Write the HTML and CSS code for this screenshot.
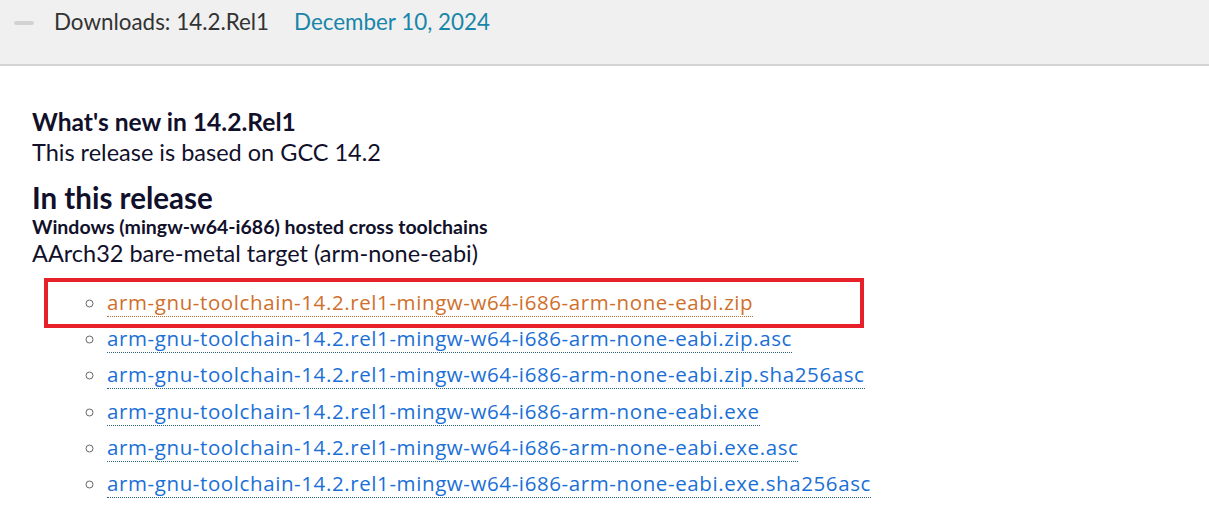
FILE: index.html
```html
<!DOCTYPE html>
<html lang="en">
<head>
  <meta charset="UTF-8">
  <meta name="viewport" content="width=device-width, initial-scale=1.0">
  <title>Downloads: 14.2.Rel1</title>
  <link rel="stylesheet" href="styles.css">
</head>
<body>
  <div class="release-header">
    <span class="toggle-icon"></span>
    <span class="release-title">Downloads: 14.2.Rel1</span>
    <span class="release-date">December 10, 2024</span>
  </div>

  <div class="release-body">
    <h3>What's new in 14.2.Rel1</h3>
    <p class="lead">This release is based on GCC 14.2</p>

    <h2>In this release</h2>
    <h4>Windows (mingw-w64-i686) hosted cross toolchains</h4>
    <p class="lead">AArch32 bare-metal target (arm-none-eabi)</p>

    <ul class="file-list">
      <li class="highlight"><a href="#" class="visited">arm-gnu-toolchain-14.2.rel1-mingw-w64-i686-arm-none-eabi.zip</a></li>
      <li><a href="#">arm-gnu-toolchain-14.2.rel1-mingw-w64-i686-arm-none-eabi.zip.asc</a></li>
      <li><a href="#">arm-gnu-toolchain-14.2.rel1-mingw-w64-i686-arm-none-eabi.zip.sha256asc</a></li>
      <li><a href="#">arm-gnu-toolchain-14.2.rel1-mingw-w64-i686-arm-none-eabi.exe</a></li>
      <li><a href="#">arm-gnu-toolchain-14.2.rel1-mingw-w64-i686-arm-none-eabi.exe.asc</a></li>
      <li><a href="#">arm-gnu-toolchain-14.2.rel1-mingw-w64-i686-arm-none-eabi.exe.sha256asc</a></li>
    </ul>
  </div>
</body>
</html>
```

FILE: styles.css
```css
* {
  margin: 0;
  padding: 0;
  box-sizing: border-box;
}

body {
  font-family: Lato, 'Open Sans', sans-serif;
  background: #fff;
  color: #11102b;
}

.release-header {
  height: 66px;
  background: #f0f0f0;
  border-bottom: 2px solid #d5d5d5;
  display: flex;
  align-items: flex-start;
  padding: 8px 0 0 14px;
  font-size: 22.4px;
}

.toggle-icon {
  width: 20px;
  height: 4px;
  margin-top: 13px;
  background: #d2d2d2;
  border-radius: 2px;
}

.release-title {
  margin-left: 20px;
  color: #333;
}

.release-date {
  margin-left: 25px;
  color: #1886a8;
}

.release-body {
  padding: 41px 0 0 32px;
}

h3 {
  font-size: 24.6px;
  font-weight: 700;
  line-height: 30px;
}

.lead {
  font-size: 23.5px;
  line-height: 30px;
}

h2 {
  font-size: 29.5px;
  font-weight: 700;
  line-height: 36px;
  margin-top: 13px;
}

h4 {
  font-size: 19.5px;
  font-weight: 700;
  line-height: 22px;
}

.file-list {
  list-style: circle;
  margin-top: 16px;
  padding-left: 75px;
  color: #666;
}

.file-list li {
  font-family: 'Open Sans', 'Noto Sans', sans-serif;
  font-size: 20.5px;
  letter-spacing: 0.6px;
  line-height: 36.2px;
  position: relative;
}

.file-list a {
  color: #1a6fd6;
  text-decoration: none;
  border-bottom: 1px dotted #2b6c7a;
}

.file-list a.visited {
  color: #cf6f2c;
  border-bottom-color: #b8703a;
}

.file-list li.highlight::after {
  content: "";
  position: absolute;
  left: -63px;
  top: -6px;
  width: 812px;
  height: 42px;
  border: 4px solid #e8202a;
  pointer-events: none;
}
```
